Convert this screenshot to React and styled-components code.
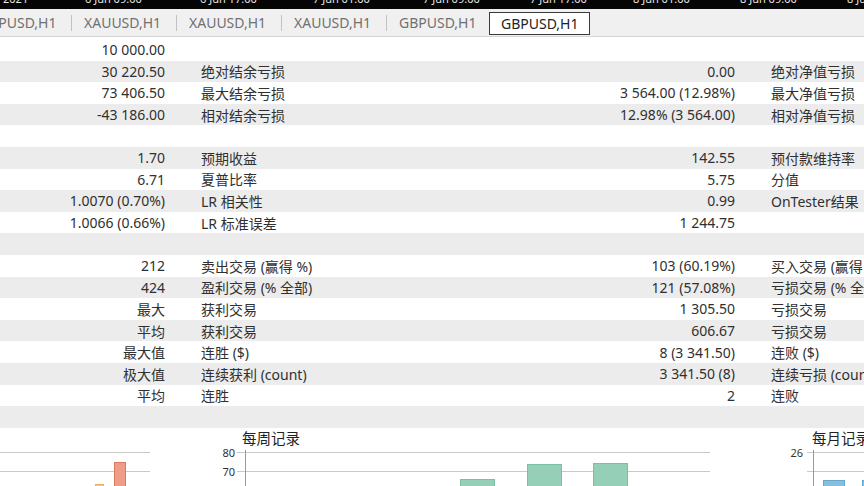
import React from 'react';
import styled, { createGlobalStyle } from 'styled-components';

const Global = createGlobalStyle`
  html, body { margin: 0; padding: 0; background: #fff; overflow: hidden; }
  body { font-family: "Noto Sans", "Noto Sans CJK SC", sans-serif; color: #2f2f2f; }
`;

const Page = styled.div`
  width: 864px;
  height: 486px;
  overflow: hidden;
  display: flex;
  flex-direction: column;
  background: #fff;
`;

const TimeAxis = styled.div`
  position: relative;
  flex: none;
  height: 9px;
  background: #050505;
  overflow: hidden;
`;

const TimeLabel = styled.span`
  position: absolute;
  top: -7px;
  left: ${p => p.$x}px;
  font-size: 11px;
  line-height: 12px;
  color: #e4e4e4;
  white-space: nowrap;
`;

const TabBar = styled.div`
  flex: none;
  height: 27px;
  background: #f0f0f0;
  border-bottom: 1px solid #d6d6d6;
  overflow: hidden;
`;

const TabStrip = styled.div`
  display: flex;
  align-items: center;
  height: 100%;
  margin-left: -33px;
`;

const Tab = styled.div`
  flex: none;
  width: ${p => p.$w}px;
  box-sizing: border-box;
  padding-left: 12px;
  font-size: 14px;
  line-height: 27px;
  color: #707070;
  white-space: nowrap;
  overflow: hidden;
`;

const Sep = styled.div`
  flex: none;
  width: 1px;
  height: 16px;
  background: #c2c2c2;
`;

const ActiveTab = styled.div`
  flex: none;
  align-self: flex-end;
  width: 101px;
  height: 23px;
  margin-bottom: 1px;
  box-sizing: border-box;
  border: 1px solid #3a3a3a;
  background: #fff;
  padding-left: 11px;
  font-size: 14px;
  line-height: 21px;
  color: #222;
  white-space: nowrap;
`;

const Table = styled.div`
  flex: none;
  margin-top: 2px;
  display: flex;
  flex-direction: column;
`;

const Row = styled.div`
  display: grid;
  grid-template-columns: 165px 300px 270px 1fr;
  height: 21.6px;
  align-items: center;
  background: ${p => (p.$alt ? '#ececec' : '#ffffff')};
  font-size: 14px;
  color: #303030;
  white-space: nowrap;
`;

const Value = styled.div`
  text-align: right;
  overflow: visible;
`;

const Label = styled.div`
  padding-left: 36px;
  overflow: hidden;
`;

const Charts = styled.div`
  flex: none;
  display: flex;
  height: 58px;
  background: #fff;
`;

const ChartPanel = styled.svg`
  display: block;
  flex: none;
  width: ${p => p.$w}px;
  height: 58px;
  font-family: "Noto Sans", "Noto Sans CJK SC", sans-serif;
`;

const rows = [
  ['10 000.00', '', '', ''],
  ['30 220.50', '绝对结余亏损', '0.00', '绝对净值亏损'],
  ['73 406.50', '最大结余亏损', '3 564.00 (12.98%)', '最大净值亏损'],
  ['-43 186.00', '相对结余亏损', '12.98% (3 564.00)', '相对净值亏损'],
  ['', '', '', ''],
  ['1.70', '预期收益', '142.55', '预付款维持率'],
  ['6.71', '夏普比率', '5.75', '分值'],
  ['1.0070 (0.70%)', 'LR 相关性', '0.99', 'OnTester结果'],
  ['1.0066 (0.66%)', 'LR 标准误差', '1 244.75', ''],
  ['', '', '', ''],
  ['212', '卖出交易 (赢得 %)', '103 (60.19%)', '买入交易 (赢得 %)'],
  ['424', '盈利交易 (% 全部)', '121 (57.08%)', '亏损交易 (% 全部)'],
  ['最大', '获利交易', '1 305.50', '亏损交易'],
  ['平均', '获利交易', '606.67', '亏损交易'],
  ['最大值', '连胜 ($)', '8 (3 341.50)', '连败 ($)'],
  ['极大值', '连续获利 (count)', '3 341.50 (8)', '连续亏损 (count)'],
  ['平均', '连胜', '2', '连败'],
  ['', '', '', ''],
];

const times = [
  [3, '2021'],
  [85, '6 Jun 09:00'],
  [200, '6 Jun 17:00'],
  [313, '7 Jun 01:00'],
  [423, '7 Jun 09:00'],
  [530, '7 Jun 17:00'],
  [633, '8 Jun 01:00'],
  [740, '8 Jun 09:00'],
  [847, '8 Jun 17:00'],
];

const GRID = '#c9c9c9';
const AXIS = '#9a9a9a';

function ResultChart() {
  return (
    <ChartPanel $w={215} viewBox="0 0 215 58">
      <line x1="0" y1="24.5" x2="150" y2="24.5" stroke={GRID} />
      <line x1="0" y1="43.5" x2="150" y2="43.5" stroke={GRID} />
      <rect x="95.5" y="56.5" width="8" height="4" fill="#f6c88a" stroke="#e9ad63" />
      <rect x="114.5" y="34.5" width="11" height="30" fill="#ef9c88" stroke="#d97a62" />
    </ChartPanel>
  );
}

function WeeklyChart() {
  const bars = [
    [245, 51],
    [312, 36],
    [378, 35],
  ];
  return (
    <ChartPanel $w={555} viewBox="0 0 555 58">
      <text x="27" y="16" fontSize="14.5" fill="#222">每周记录</text>
      <text x="20" y="29" fontSize="11" fill="#333" textAnchor="end">80</text>
      <text x="20" y="48" fontSize="11" fill="#333" textAnchor="end">70</text>
      <line x1="22" y1="24.5" x2="495" y2="24.5" stroke={GRID} />
      <line x1="22" y1="43.5" x2="495" y2="43.5" stroke={GRID} />
      <line x1="30.5" y1="22" x2="30.5" y2="58" stroke={AXIS} />
      {bars.map(([x, y]) => (
        <rect key={x} x={x + 0.5} y={y + 0.5} width="34" height={70 - y} fill="#95cfb8" stroke="#7cc0a4" />
      ))}
    </ChartPanel>
  );
}

function MonthlyChart() {
  return (
    <ChartPanel $w={94} viewBox="0 0 94 58">
      <text x="42" y="16" fontSize="14.5" fill="#222">每月记录</text>
      <text x="33" y="29" fontSize="11" fill="#333" textAnchor="end">26</text>
      <line x1="37" y1="24.5" x2="94" y2="24.5" stroke={GRID} />
      <line x1="37" y1="43.5" x2="94" y2="43.5" stroke={GRID} />
      <line x1="43.5" y1="22" x2="43.5" y2="58" stroke={AXIS} />
      <rect x="53.5" y="52.5" width="21" height="10" fill="#86bedd" stroke="#65a8cf" />
      <rect x="92.5" y="52.5" width="10" height="10" fill="#86bedd" stroke="#65a8cf" />
    </ChartPanel>
  );
}

export default function App() {
  return (
    <Page>
      <Global />
      <TimeAxis>
        {times.map(([x, t]) => (
          <TimeLabel key={t} $x={x}>{t}</TimeLabel>
        ))}
      </TimeAxis>
      <TabBar>
        <TabStrip>
          <Tab $w={104}>GBPUSD,H1</Tab>
          <Sep />
          <Tab $w={104}>XAUUSD,H1</Tab>
          <Sep />
          <Tab $w={104}>XAUUSD,H1</Tab>
          <Sep />
          <Tab $w={104}>XAUUSD,H1</Tab>
          <Sep />
          <Tab $w={102}>GBPUSD,H1</Tab>
          <ActiveTab>GBPUSD,H1</ActiveTab>
        </TabStrip>
      </TabBar>
      <Table>
        {rows.map((r, i) => (
          <Row key={i} $alt={i % 2 === 1}>
            <Value>{r[0]}</Value>
            <Label>{r[1]}</Label>
            <Value>{r[2]}</Value>
            <Label>{r[3]}</Label>
          </Row>
        ))}
      </Table>
      <Charts>
        <ResultChart />
        <WeeklyChart />
        <MonthlyChart />
      </Charts>
    </Page>
  );
}
